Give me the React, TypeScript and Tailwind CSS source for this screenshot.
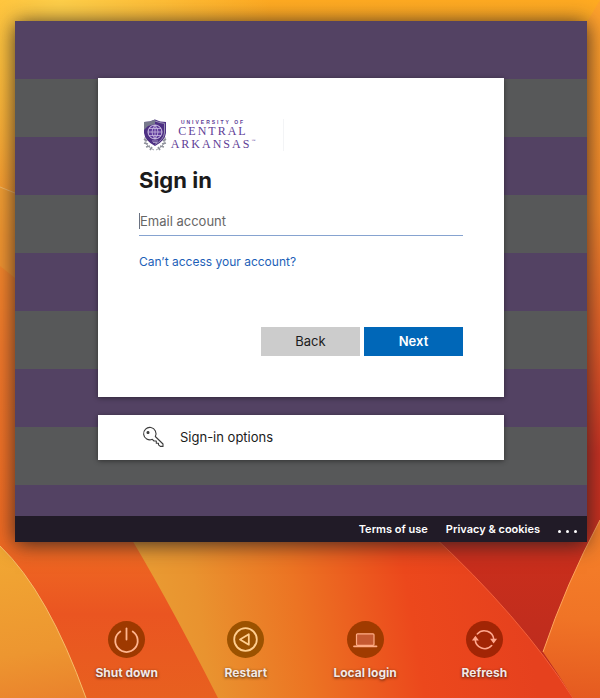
import React from 'react';

const Wallpaper: React.FC = () => (
  <svg
    className="absolute inset-0 h-full w-full"
    viewBox="0 0 600 698"
    preserveAspectRatio="none"
    aria-hidden="true"
  >
    <defs>
      <linearGradient id="sky" x1="0" y1="0" x2="0" y2="1">
        <stop offset="0" stopColor="#ffab22" />
        <stop offset="0.2" stopColor="#f99a2a" />
        <stop offset="0.5" stopColor="#f2792a" />
        <stop offset="0.78" stopColor="#f06a22" />
        <stop offset="0.88" stopColor="#ea5521" />
        <stop offset="1" stopColor="#e8601f" />
      </linearGradient>
      <radialGradient id="glow" cx="0.1" cy="0" r="0.35">
        <stop offset="0" stopColor="#ffd04a" />
        <stop offset="1" stopColor="#ffd04a" stopOpacity="0" />
      </radialGradient>
      <linearGradient id="rightEdge" x1="0" y1="0" x2="0" y2="1">
        <stop offset="0" stopColor="#ffa32c" />
        <stop offset="0.3" stopColor="#f5892b" />
        <stop offset="0.5" stopColor="#e25a27" />
        <stop offset="0.65" stopColor="#c93022" />
        <stop offset="0.8" stopColor="#c92e1c" />
        <stop offset="1" stopColor="#b92c1e" />
      </linearGradient>
      <linearGradient id="middle" gradientUnits="userSpaceOnUse" x1="150" y1="640" x2="520" y2="580">
        <stop offset="0" stopColor="#e99c33" />
        <stop offset="0.14" stopColor="#e9932f" />
        <stop offset="0.4" stopColor="#ec7423" />
        <stop offset="0.7" stopColor="#ec481c" />
        <stop offset="1" stopColor="#e6411e" />
      </linearGradient>
      <linearGradient id="petal" gradientUnits="userSpaceOnUse" x1="10" y1="550" x2="40" y2="720">
        <stop offset="0" stopColor="#f1a733" />
        <stop offset="0.6" stopColor="#ed9630" />
        <stop offset="1" stopColor="#e97c2b" />
      </linearGradient>
      <linearGradient id="corner" gradientUnits="userSpaceOnUse" x1="590" y1="540" x2="580" y2="698">
        <stop offset="0" stopColor="#f57f29" />
        <stop offset="0.5" stopColor="#f07426" />
        <stop offset="1" stopColor="#e55a20" />
      </linearGradient>
    </defs>
    <rect width="600" height="698" fill="url(#sky)" />
    <rect width="600" height="698" fill="url(#glow)" />
    <path d="M420 22 H587 L600 0 V698 H420 Z" fill="url(#rightEdge)" />
    <path d="M0 187 L30 199 L30 290 L0 266 Z" fill="#eda135" fillOpacity="0.5" />
    <path d="M0 187 L30 199" stroke="#f8bd6c" strokeWidth="1" />
    <path d="M120 520 Q162 588 218 698 L573 698 Q520 616 430 533 Z" fill="url(#middle)" />
    <path d="M430 533 Q520 616 573 698" fill="none" stroke="#f4603a" strokeWidth="1" />
    <path d="M600 520 Q566 584 543 652 Q559 675 573 698 L600 698 Z" fill="url(#corner)" />
    <path d="M600 520 Q566 584 543 652" fill="none" stroke="#ffa55b" strokeWidth="1" />
    <path d="M0 546 Q48 592 86 698 L0 698 Z" fill="url(#petal)" />
    <path d="M0 546 Q48 592 86 698" fill="none" stroke="#f7bd69" strokeWidth="1" />
  </svg>
);

const Shield: React.FC = () => (
  <svg className="h-8 w-6 shrink-0" viewBox="0 0 24 32" fill="none" aria-hidden="true">
    <path d="M2 18 Q1 27 11 31 M22 18 Q23 27 13 31" stroke="#a3a5ad" strokeWidth="1" />
    <path
      d="M1 20l3 2M1 24l4 1M3 28l4-1M7 31l2-3M23 20l-3 2M23 24l-4 1M21 28l-4-1M17 31l-2-3"
      stroke="#8f929b"
      strokeWidth="1.6"
    />
    <path d="M12 .5 Q17 3 23 3 V14 Q22 22 12 27 Q2 22 1 14 V3 Q7 3 12 .5Z" fill="#4d2f83" />
    <path d="M12 2 Q17 4 21.500 4.400 V14 Q20.500 21 12 25.300" stroke="#9a92b5" strokeWidth="1" />
    <path d="M12 .5 Q7 3 1 3 V11 L5 7 L12 5Z" fill="#77798c" />
    <circle cx="12" cy="13" r="7" fill="#5f3a9c" stroke="#d5cae8" strokeWidth="1" />
    <path d="M5 13h14M6 9.500h12M6 16.500h12M12 6v14M12 6q-6 7 0 14M12 6q6 7 0 14" stroke="#d5cae8" strokeWidth="0.7" />
    <path d="M9 22h6M10 23.500h4" stroke="#c9bfe0" strokeWidth="0.7" />
  </svg>
);

const Logo: React.FC = () => (
  <div className="flex h-8 w-[141px] items-start gap-1 border-r border-gray-100">
    <Shield />
    <div className="flex w-[84px] flex-col items-center whitespace-nowrap font-['Liberation_Serif',serif] text-[#603d96]">
      <span className="font-['Liberation_Sans',sans-serif] text-[5px] leading-[6px] font-bold tracking-[2px]">
        UNIVERSITY OF
      </span>
      <span className="text-[12px] leading-[13px] tracking-[2px]">CENTRAL</span>
      <span className="flex text-[12px] leading-[13px] tracking-[2px]">
        ARKANSAS
        <span className="text-[4px] leading-[6px] tracking-normal">™</span>
      </span>
    </div>
  </div>
);

const KeyIcon: React.FC = () => (
  <svg
    className="size-6 shrink-0"
    viewBox="0 0 24 24"
    fill="none"
    stroke="#3c3c3c"
    strokeWidth="1.1"
    strokeLinejoin="round"
    aria-hidden="true"
  >
    <path d="M13.300 10.500 A6.200 6.200 0 1 0 10.300 13.300 L12 15 H14.300 V17.200 H16.500 V18.800 L18.300 20.400 H21 V18 Z" />
    <circle cx="6" cy="6.500" r="1" fill="#3c3c3c" />
  </svg>
);

const PowerIcon = () => (
  <>
    <path d="M12.300 10.500 A11.200 11.200 0 1 0 24.700 10.500" />
    <path d="M18.500 7.500 V18.500" />
  </>
);

const RestartIcon = () => (
  <>
    <circle cx="18.500" cy="18.500" r="11.300" />
    <path d="M13 18.500 L21.800 13.300 V23.700 Z" strokeLinejoin="round" />
  </>
);

const LaptopIcon = () => (
  <>
    <rect x="9.500" y="12.800" width="17.500" height="11.500" rx="1" fill="#c65a32" strokeWidth="1.2" />
    <path d="M7 25.300 H29.500" strokeWidth="1.8" />
  </>
);

const RefreshIcon = () => (
  <>
    <path d="M11.300 13 A9.500 9.500 0 0 1 27.800 18.500" strokeWidth="1.6" />
    <path d="M25.700 24.500 A9.500 9.500 0 0 1 9.200 18.500" strokeWidth="1.6" />
    <path
      d="M25.500 18.500 H29.700 L27.600 21.300Z M7.300 18.800 H11.500 L9.400 16Z"
      fill="currentColor"
      strokeWidth="1.4"
    />
  </>
);

const actions = [
  { label: 'Shut down', Icon: PowerIcon, circle: 'bg-[#9e3900] text-[#ffb58e]' },
  { label: 'Restart', Icon: RestartIcon, circle: 'bg-[#9c5200] text-[#ffce8e]' },
  { label: 'Local login', Icon: LaptopIcon, circle: 'bg-[#a03b00] text-[#ffac85]' },
  { label: 'Refresh', Icon: RefreshIcon, circle: 'bg-[#a22505] text-[#ffa78e]' },
];

const SignInCard: React.FC = () => (
  <form
    className="bg-white px-[41px] pt-[41px] pb-[41px] shadow-[0_1px_5px_rgba(0,0,0,0.45)]"
    onSubmit={(e) => e.preventDefault()}
  >
    <div className="pl-1">
      <Logo />
    </div>
    <h1 className="mt-[15px] text-[22px] leading-7 font-bold text-[#1b1b1b]">Sign in</h1>
    <div className="mt-3 flex h-[30px] items-center border-b border-[#86a3d0]">
      <span className="h-4 w-px bg-gray-500" />
      <input
        type="email"
        aria-label="Email account"
        placeholder="Email account"
        className="w-full min-w-0 bg-transparent text-[13px] leading-5 outline-none placeholder:text-[#666]"
      />
    </div>
    <a href="#" className="mt-4 block text-xs leading-5 text-[#1d5fb8]">
      Can’t access your account?
    </a>
    <div className="mt-[55px] flex justify-end gap-1">
      <button type="button" className="h-[29px] w-[99px] bg-[#cccccc] text-[13px] text-[#1b1b1b]">
        Back
      </button>
      <button type="submit" className="h-[29px] w-[99px] bg-[#0067b8] text-[13px] font-semibold text-white">
        Next
      </button>
    </div>
  </form>
);

export default function App() {
  return (
    <div className="relative isolate min-h-screen overflow-hidden font-[Inter,'Liberation_Sans',sans-serif]">
      <Wallpaper />
      <div className="relative flex min-h-screen flex-col pt-[21px]">
        <main className="mr-[13px] ml-[15px] bg-[repeating-linear-gradient(#534263_0_58px,#575859_58px_116px)] shadow-[0_2px_20px_rgba(40,30,30,0.9)]">
          <div className="mx-auto flex max-w-[406px] flex-col gap-[18px] pt-[57px] pb-14">
            <SignInCard />
            <button
              type="button"
              className="flex h-[45px] items-center gap-3.5 bg-white pl-11 text-[13px] text-[#1b1b1b] shadow-[0_1px_5px_rgba(0,0,0,0.45)]"
            >
              <KeyIcon />
              Sign-in options
            </button>
          </div>
          <footer className="flex h-[26px] items-center justify-end gap-[18px] bg-[#211b27] pr-2.5 text-[11px] font-semibold text-white">
            <a href="#">Terms of use</a>
            <a href="#">Privacy &amp; cookies</a>
            <button type="button" aria-label="More options" className="flex h-5 items-center gap-[5px] pt-1">
              <span className="size-[3px] rounded-full bg-white" />
              <span className="size-[3px] rounded-full bg-white" />
              <span className="size-[3px] rounded-full bg-white" />
            </button>
          </footer>
        </main>
        <nav className="mt-[79px] mr-[56px] mb-3.5 ml-[67px] grid grid-cols-4">
          {actions.map(({ label, Icon, circle }) => (
            <button key={label} type="button" className="flex flex-col items-center gap-[5px]">
              <span className={`size-[37px] rounded-full ${circle}`}>
                <svg
                  className="size-full"
                  viewBox="0 0 37 37"
                  fill="none"
                  stroke="currentColor"
                  strokeWidth="1.8"
                  strokeLinecap="round"
                  aria-hidden="true"
                >
                  <Icon />
                </svg>
              </span>
              <span className="text-xs leading-5 font-bold text-[#f3e9e6] [text-shadow:0_1px_3px_rgba(0,0,0,0.7)]">
                {label}
              </span>
            </button>
          ))}
        </nav>
      </div>
    </div>
  );
}
